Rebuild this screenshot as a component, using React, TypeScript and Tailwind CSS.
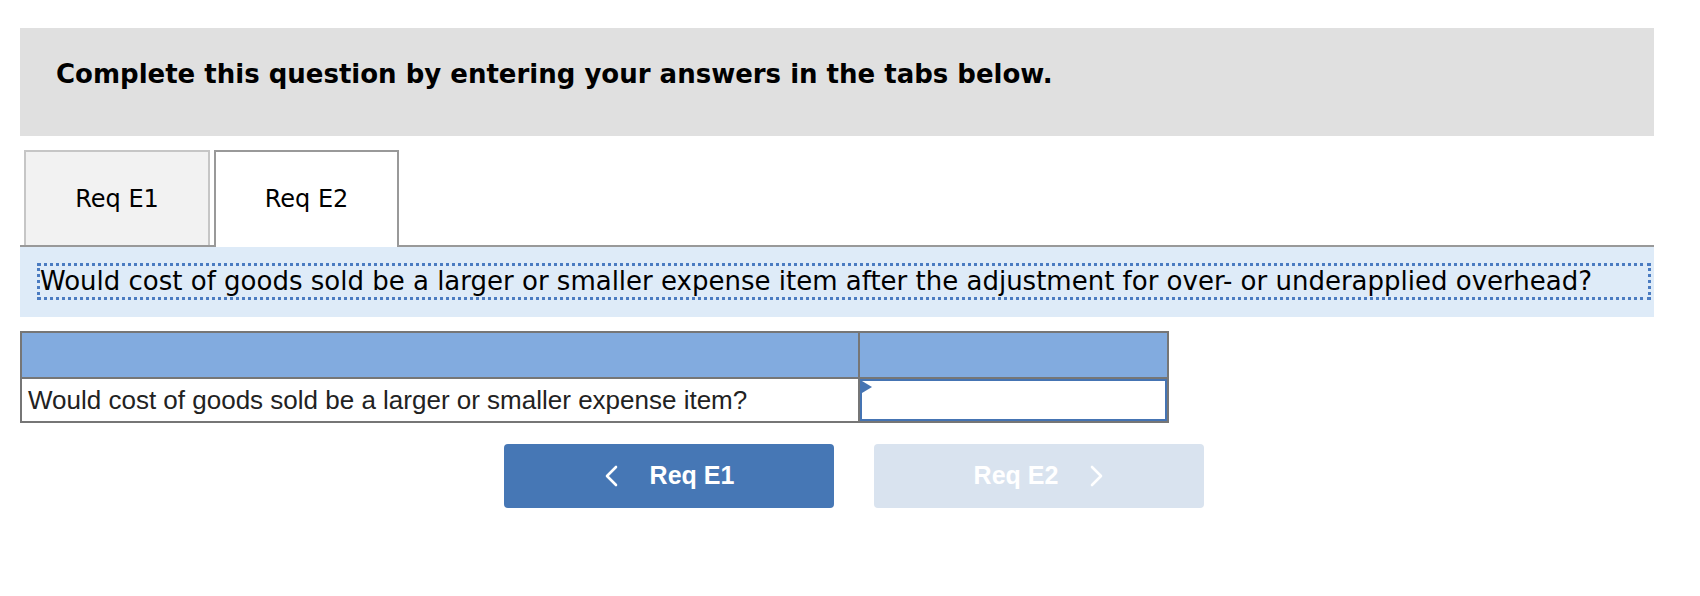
import React from "react";

const verdana = "font-['DejaVu_Sans',Verdana,sans-serif]";
const arial = "font-['Liberation_Sans',Arial,sans-serif]";

function Chevron({ dir }: { dir: "left" | "right" }) {
  return (
    <svg width="14" height="22" viewBox="0 0 14 22" fill="none" aria-hidden>
      <polyline
        points={dir === "left" ? "12,2 3,11 12,20" : "2,2 11,11 2,20"}
        stroke="currentColor"
        strokeWidth="2.6"
        strokeLinecap="round"
        strokeLinejoin="round"
      />
    </svg>
  );
}

export default function App() {
  return (
    <div className="w-[1700px] h-[596px] bg-white pl-[20px] pr-[46px] pt-[28px]">
      <div className={`h-[108px] bg-[#e0e0e0] pt-[31px] pl-[36px] ${verdana}`}>
        <h1 className="text-[26px] font-bold text-black leading-[30px]">
          Complete this question by entering your answers in the tabs below.
        </h1>
      </div>

      <div className={`mt-[14px] flex items-start border-b-2 border-[#999999] ${verdana}`}>
        <button className="ml-[4px] w-[186px] h-[95px] bg-[#f2f2f2] border-2 border-b-0 border-[#c6c6c6] text-[24px] text-black">
          Req E1
        </button>
        <button className="ml-[4px] -mb-[2px] w-[185px] h-[97px] bg-white border-2 border-b-0 border-[#999999] text-[24px] text-black pb-[2px]">
          Req E2
        </button>
      </div>

      <div className={`h-[70px] bg-[#deebf8] pt-[16px] pl-[17px] pr-[3px] ${verdana}`}>
        <div className="border-[3px] border-dotted border-[#4a7bc1] text-[26px] leading-[31px] text-black">
          Would cost of goods sold be a larger or smaller expense item after the adjustment for over- or underapplied overhead?
        </div>
      </div>

      <div className={`mt-[14px] w-[1149px] border-2 border-[#767676] ${arial}`}>
        <div className="flex h-[44px] bg-[#82abdf]">
          <div className="w-[838px] border-r-2 border-[#767676]" />
          <div className="flex-1" />
        </div>
        <div className="flex h-[44px] border-t-2 border-[#767676]">
          <div className="w-[838px] border-r-2 border-[#767676] flex items-center pl-[6px] text-[26px] text-[#222222]">
            Would cost of goods sold be a larger or smaller expense item?
          </div>
          <div className="flex-1">
            <div className="relative h-full border-2 border-[#4574b3] bg-white">
              <span className="absolute left-0 top-0 w-0 h-0 border-y-[6px] border-y-transparent border-l-[10px] border-l-[#4574b3]" />
            </div>
          </div>
        </div>
      </div>

      <div className={`mt-[21px] flex gap-[40px] pl-[484px] ${arial}`}>
        <button className="w-[330px] h-[64px] rounded-[4px] bg-[#4677b5] text-white flex items-center justify-center gap-[32px]">
          <Chevron dir="left" />
          <span className="text-[25px] font-bold">Req E1</span>
        </button>
        <button className="w-[330px] h-[64px] rounded-[4px] bg-[#d9e3ef] text-white flex items-center justify-center gap-[32px]">
          <span className="text-[25px] font-bold">Req E2</span>
          <Chevron dir="right" />
        </button>
      </div>
    </div>
  );
}
